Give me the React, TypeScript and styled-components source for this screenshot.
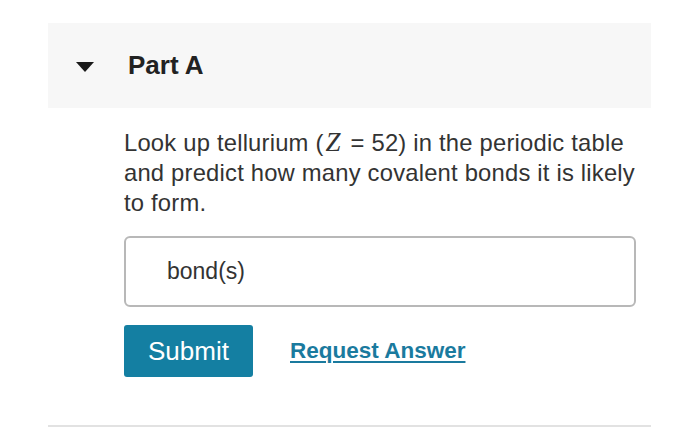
import React from "react";
import styled, { createGlobalStyle } from "styled-components";

const Global = createGlobalStyle`
  html, body { margin: 0; padding: 0; background: #fff; }
  body { font-family: "Liberation Sans", Arial, sans-serif; color: #333; }
`;

const Page = styled.div`
  padding: 23px 49px 0 48px;
`;

const Header = styled.div`
  height: 85px;
  background: #f7f7f7;
  display: flex;
  align-items: center;
  padding-left: 28px;
  gap: 34px;
`;

const Caret = styled.span`
  width: 0;
  height: 0;
  border-left: 9px solid transparent;
  border-right: 9px solid transparent;
  border-top: 10px solid #1a1a1a;
  margin-top: 2px;
`;

const Title = styled.h2`
  margin: 0;
  font-size: 26px;
  font-weight: 700;
  color: #222;
`;

const Body = styled.div`
  padding: 20px 12px 0 76px;
`;

const Question = styled.p`
  margin: 0;
  font-size: 23.8px;
  line-height: 30px;
  letter-spacing: 0.2px;
  color: #333;
`;

const MathVar = styled.span`
  font-family: "Liberation Serif", "Times New Roman", serif;
  font-style: italic;
  font-size: 27px;
  line-height: 1;
  padding: 0 3px 0 2px;
`;

const AnswerBox = styled.div`
  margin: 18px 3px 0 0;
  height: 71px;
  box-sizing: border-box;
  border: 2px solid #b8b8b8;
  border-radius: 6px;
  display: flex;
  align-items: center;
  padding-left: 41px;
  font-size: 23px;
  color: #333;
`;

const Actions = styled.div`
  margin-top: 18px;
  display: flex;
  align-items: center;
  gap: 37px;
`;

const SubmitButton = styled.button`
  width: 129px;
  height: 52px;
  border: none;
  border-radius: 3px;
  background: #147fa2;
  color: #fff;
  font-family: "Liberation Sans", Arial, sans-serif;
  font-size: 26px;
  padding: 0;
`;

const Link = styled.a`
  color: #1a7a9e;
  font-weight: 700;
  font-size: 22.5px;
  text-decoration: underline;
  text-underline-offset: 3px;
`;

const Divider = styled.hr`
  margin: 48px 0 0;
  border: none;
  border-top: 2px solid #e2e2e2;
`;

export default function App() {
  return (
    <>
      <Global />
      <Page>
        <Header>
          <Caret />
          <Title>Part A</Title>
        </Header>
        <Body>
          <Question>
            Look up tellurium (<MathVar>Z</MathVar> = 52) in the periodic table and predict how many covalent bonds it is likely to form.
          </Question>
          <AnswerBox>bond(s)</AnswerBox>
          <Actions>
            <SubmitButton>Submit</SubmitButton>
            <Link href="#">Request Answer</Link>
          </Actions>
        </Body>
        <Divider />
      </Page>
    </>
  );
}
